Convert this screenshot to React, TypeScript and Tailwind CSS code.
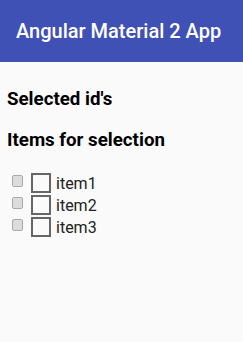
import React from "react";

const items = ["item1", "item2", "item3"];

export default function App() {
  return (
    <div className="min-h-[342px] bg-[#fafafa] font-['Roboto',sans-serif] text-[#000]">
      <header className="flex h-[62px] items-center bg-[#3f51b5] px-4">
        <span className="text-[20px] font-medium text-white">Angular Material 2 App</span>
      </header>
      <div className="px-[7px]">
        <h3 className="mt-[25.5px] text-[18.72px] leading-[22px] font-bold">Selected id's</h3>
        <h3 className="mt-[19px] text-[18.72px] leading-[22px] font-bold">Items for selection</h3>
        <ul className="mt-[20.5px] pl-[5px]">
          {items.map((item) => (
            <li key={item} className="flex h-[22px] items-start">
              <input
                type="checkbox"
                className="m-0 mt-[4px] h-[12px] w-[11px] appearance-none rounded-[2px] border border-[#a9a9a9] bg-[#dcdcdc]"
              />
              <span className="ml-[8px] mt-[2px] h-[20px] w-[20px] border-2 border-[#666]" />
              <span className="ml-[5px] mt-[4.5px] text-[16px] leading-[16px] text-[#212121]">{item}</span>
            </li>
          ))}
        </ul>
      </div>
    </div>
  );
}
